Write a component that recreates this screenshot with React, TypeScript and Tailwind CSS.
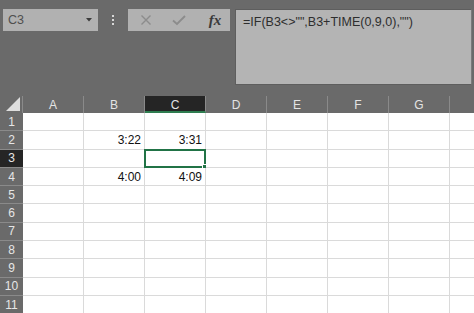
import React from "react"

const cols = ["A", "B", "C", "D", "E", "F", "G", "H"]
const rows = [1, 2, 3, 4, 5, 6, 7, 8, 9, 10, 11]

const values: Record<string, string> = {
  B2: "3:22",
  C2: "3:31",
  B4: "4:00",
  C4: "4:09",
}

const activeCol = "C"
const activeRow = 3

function FormulaRow() {
  return (
    <div className="flex h-[96px] pt-[9px]">
      <div className="flex items-start w-[235px] shrink-0">
        <div className="ml-[3px] w-[95px] h-[22px] bg-[#b1b1b1] flex items-center pl-[5px] pr-[6px] text-[12.5px] text-[#4f4f4f]">
          <span className="flex-1">C3</span>
          <svg width="6" height="4" viewBox="0 0 6 4">
            <path d="M0 0 L6 0 L3 3.5 Z" fill="#3c3c3c" />
          </svg>
        </div>
        <div className="w-[30px] h-[22px] flex flex-col items-center justify-center gap-[2px]">
          <span className="w-[2px] h-[2px] bg-[#d8d8d8]" />
          <span className="w-[2px] h-[2px] bg-[#d8d8d8]" />
          <span className="w-[2px] h-[2px] bg-[#d8d8d8]" />
        </div>
        <div className="w-[102px] h-[22px] bg-[#b1b1b1] flex items-center">
          <div className="w-[34px] flex justify-center pl-[2px]">
            <svg width="12" height="12" viewBox="0 0 12 12">
              <path d="M1.5 1.5 L10.5 10.5 M10.5 1.5 L1.5 10.5" stroke="#8c8c8c" strokeWidth="1.4" fill="none" />
            </svg>
          </div>
          <div className="w-[34px] flex justify-center">
            <svg width="14" height="12" viewBox="0 0 14 12">
              <path d="M1 6.5 L5 10 L13 2" stroke="#8c8c8c" strokeWidth="1.8" fill="none" />
            </svg>
          </div>
          <div className="w-[34px] flex justify-center pl-[4px] font-['Liberation_Serif',serif] italic text-[15px] font-bold text-[#3a3a3a] leading-none">
            fx
          </div>
        </div>
      </div>
      <div className="w-[237px] h-[76px] bg-[#b4b4b4] border border-[#5e5e5e] border-r-[#7a7a7a] pl-[7px] pt-[3px] text-[12.5px] text-[#2e2e2e] font-['Liberation_Sans',sans-serif]">
        {'=IF(B3<>"",B3+TIME(0,9,0),"")'}
      </div>
    </div>
  )
}

function HeaderRow() {
  return (
    <div className="flex h-[17px] text-[12px] text-[#e4e4e4]">
      <div className="w-[23px] shrink-0 flex items-end justify-end pr-[2px] pb-[2px] border-r border-[#8a8a8a]">
        <svg width="14" height="14" viewBox="0 0 14 14">
          <path d="M0 14 L14 14 L14 0 Z" fill="#dedede" />
        </svg>
      </div>
      {cols.map((c) => (
        <div
          key={"h-" + c}
          className={[
            "w-[61px] shrink-0 flex items-center justify-center border-r border-[#8a8a8a]",
            c === activeCol ? "bg-[#252525] border-b-2 border-b-[#2f7d50] pt-[2px]" : "",
          ].join(" ")}>
          {c === "H" ? "" : c}
        </div>
      ))}
    </div>
  )
}

export default function App() {
  return (
    <div className="w-[474px] h-[313px] overflow-hidden bg-[#6a6a6a] font-['Liberation_Sans',sans-serif]">
      <FormulaRow />
      <HeaderRow />
      {rows.map((r) => (
        <div key={"r-" + r} className="flex h-[18.3px]">
          <div
            className={[
              "w-[23px] shrink-0 flex items-center justify-center text-[12px] text-[#e6e6e6] border-b border-[#8a8a8a]",
              r === activeRow ? "bg-[#252525]" : "bg-[#6a6a6a]",
            ].join(" ")}>
            {r}
          </div>
          {cols.map((c) => {
            const id = c + r
            const active = c === activeCol && r === activeRow
            return (
              <div
                key={id}
                className="relative w-[61px] shrink-0 bg-white border-r border-b border-[#dadada] flex items-center justify-end pr-[3px] text-[12px] text-[#111]">
                {values[id]}
                {active && (
                  <div className="absolute -left-[1px] -top-[1px] w-[62px] h-[19.3px] border-2 border-[#217346]">
                    <div className="absolute -right-[3px] -bottom-[3px] w-[5px] h-[5px] bg-[#217346] border border-white" />
                  </div>
                )}
              </div>
            )
          })}
        </div>
      ))}
    </div>
  )
}
